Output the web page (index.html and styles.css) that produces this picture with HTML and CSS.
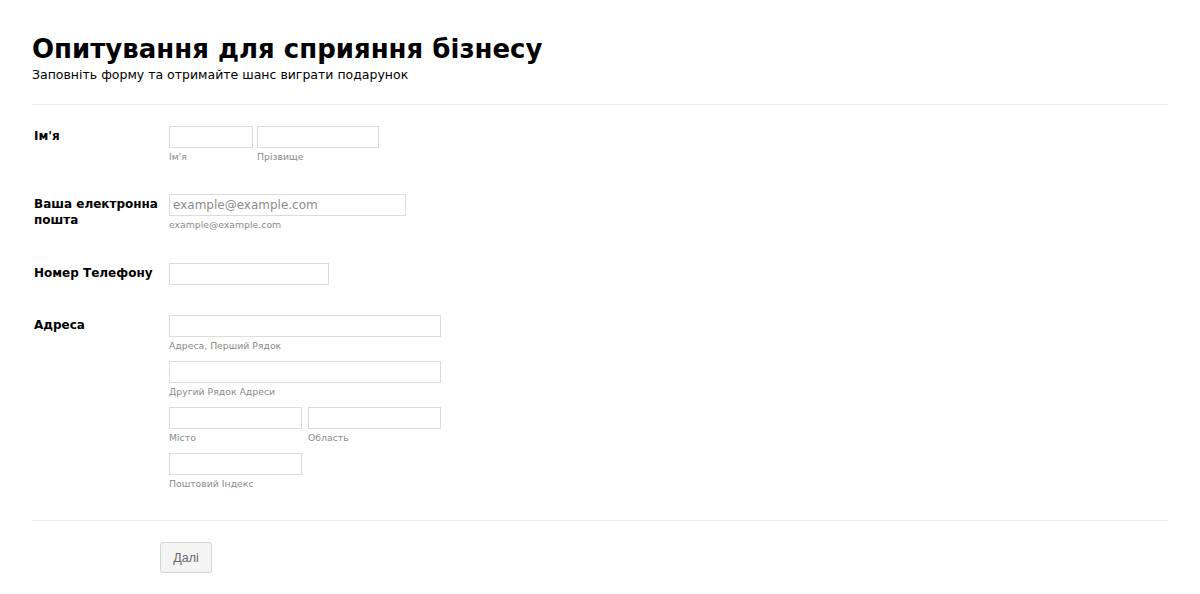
FILE: index.html
```html
<!DOCTYPE html>
<html lang="uk">

<head>
    <meta charset="UTF-8">
    <title>Опитування для сприяння бізнесу</title>
    <link rel="stylesheet" href="styles.css">
</head>

<body>

    <div class="form-all">
        <div class="form-header">
            <h1>Опитування для сприяння бізнесу</h1>
            <div class="form-subheader">Заповніть форму та отримайте шанс виграти подарунок</div>
        </div>

        <ul class="form-section">
            <li class="form-line">
                <label class="form-label">Ім'я</label>
                <div class="form-input">
                    <div class="sub-row">
                        <span class="sub-field">
                            <input type="text" class="w-first">
                            <label class="sub-label">Ім'я</label>
                        </span>
                        <span class="sub-field">
                            <input type="text" class="w-last">
                            <label class="sub-label">Прізвище</label>
                        </span>
                    </div>
                </div>
            </li>

            <li class="form-line line-email">
                <label class="form-label">Ваша електронна пошта</label>
                <div class="form-input">
                    <span class="sub-field">
                        <input type="email" class="w-email" placeholder="example@example.com">
                        <label class="sub-label">example@example.com</label>
                    </span>
                </div>
            </li>

            <li class="form-line">
                <label class="form-label">Номер Телефону</label>
                <div class="form-input">
                    <input type="tel" class="w-phone">
                </div>
            </li>

            <li class="form-line">
                <label class="form-label">Адреса</label>
                <div class="form-input address">
                    <span class="sub-field">
                        <input type="text" class="w-full">
                        <label class="sub-label">Адреса, Перший Рядок</label>
                    </span>
                    <span class="sub-field">
                        <input type="text" class="w-full">
                        <label class="sub-label">Другий Рядок Адреси</label>
                    </span>
                    <div class="sub-row">
                        <span class="sub-field">
                            <input type="text" class="w-city">
                            <label class="sub-label">Місто</label>
                        </span>
                        <span class="sub-field">
                            <input type="text" class="w-state">
                            <label class="sub-label">Область</label>
                        </span>
                    </div>
                    <span class="sub-field">
                        <input type="text" class="w-city">
                        <label class="sub-label">Поштовий Індекс</label>
                    </span>
                </div>
            </li>
        </ul>

        <div class="form-buttons">
            <button type="button" class="btn-next">Далі</button>
        </div>
    </div>

</body>

</html>
```

FILE: styles.css
```css
* {
    margin: 0;
    padding: 0;
    box-sizing: border-box;
}

body {
    font-family: "DejaVu Sans", Verdana, sans-serif;
    background: #fff;
    color: #000;
}

.form-all {
    padding: 34px 32px 0 32px;
}

.form-header {
    padding-bottom: 21px;
    border-bottom: 1px solid #eee;
}

h1 {
    font-size: 26px;
    font-weight: bold;
    line-height: 30px;
}

.form-subheader {
    font-size: 12.5px;
    line-height: 16px;
    margin-top: 3px;
}

.form-section {
    list-style: none;
    padding: 6px 0 14px 0;
    border-bottom: 1px solid #eee;
}

.form-line {
    display: flex;
    padding: 15px 2px;
}

.line-email {
    padding-bottom: 16px;
}

.form-label {
    width: 135px;
    flex-shrink: 0;
    font-size: 12px;
    font-weight: bold;
    line-height: 16px;
    padding-top: 2px;
    padding-right: 10px;
}

.form-input {
    display: flex;
    flex-direction: column;
}

.address {
    gap: 8px;
}

.sub-row {
    display: flex;
    gap: 4px;
}

.address .sub-row {
    gap: 6px;
}

.sub-field {
    display: flex;
    flex-direction: column;
}

input {
    height: 22px;
    border: 1px solid #dcdcdc;
    font-family: "DejaVu Sans", Verdana, sans-serif;
    font-size: 12px;
    padding: 0 3px;
    color: #333;
    outline: none;
}

input::placeholder {
    color: #8c8c8c;
}

.sub-label {
    font-size: 9.3px;
    line-height: 14px;
    margin-top: 2px;
    color: #8a8a8a;
}

.w-first { width: 84px; }
.w-last { width: 122px; }
.w-email { width: 237px; }
.w-phone { width: 160px; }
.w-full { width: 272px; }
.w-city { width: 133px; }
.w-state { width: 133px; }

.form-buttons {
    padding: 21px 0 0 128px;
}

.btn-next {
    width: 52px;
    height: 31px;
    font-family: "Liberation Sans", Arial, sans-serif;
    font-size: 12.5px;
    color: #666;
    background: #f4f4f4;
    border: 1px solid #d6d6d6;
    border-radius: 3px;
    box-shadow: 0 1px 1px rgba(0, 0, 0, 0.06);
}
```
